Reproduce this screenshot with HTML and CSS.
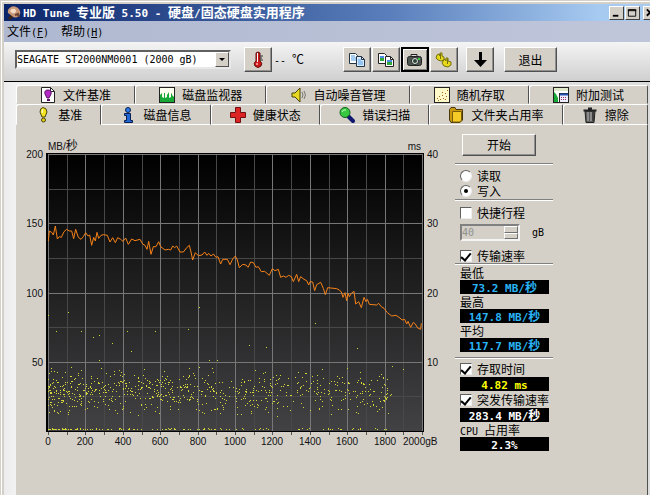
FILE: index.html
```html
<!DOCTYPE html>
<html lang="zh-CN">
<head>
    <meta charset="UTF-8">
    <meta name="viewport" content="width=device-width, initial-scale=1.0">
    <title>HD Tune 专业版 5.50</title>
    <link rel="stylesheet" href="styles.css">
</head>
<body>

    <header class="titlebar">
        <svg class="app-icon" width="16" height="16" viewBox="0 0 16 16">
            <path d="M8 9 L3 14" stroke="#3a2418" stroke-width="3"/>
            <path d="M2 8 Q1 4 5 2 Q8 0 12 3 Q16 7 13 11 Q9 14 6 11 Z" fill="#c89878"/>
            <path d="M4 6 Q5 3 9 4 Q11 6 9 8 Q6 9 4 6 Z" fill="#f2dcc4"/>
            <path d="M9 10 L12 9 L13 12" stroke="#6b4230" stroke-width="2" fill="none"/>
        </svg>
        <h1 class="title"><span class="latin">HD Tune </span>专业版<span class="latin"> 5.50 - </span>硬盘<span class="latin">/</span>固态硬盘实用程序</h1>
        <div class="window-buttons">
            <button class="win-btn" aria-label="最小化"><svg width="12" height="10" viewBox="0 0 12 10"><path d="M2 8h6" stroke="#000" stroke-width="2"/></svg></button>
            <button class="win-btn" aria-label="最大化"><svg width="12" height="10" viewBox="0 0 12 10"><path d="M1.500 1.500h8v7h-8zM1 1.500h9M1 2.500h9" stroke="#000" fill="none"/></svg></button>
            <button class="win-btn win-close" aria-label="关闭"><svg width="12" height="10" viewBox="0 0 12 10"><path d="M2 1l7 7M9 1l-7 7" stroke="#000" stroke-width="2"/></svg></button>
        </div>
    </header>

    <nav class="menubar">
        <a href="#file">文件<span class="latin">(<u>F</u>)</span></a>
        <a href="#help">帮助<span class="latin">(<u>H</u>)</span></a>
    </nav>

    <div class="toolbar">
        <div class="drive">
            <select class="drive-select" aria-label="硬盘">
                <option>SEAGATE ST2000NM0001 (2000 gB)</option>
            </select>
            <span class="drive-arrow"></span>
        </div>
        <button class="btn tool" aria-label="温度">
            <svg width="16" height="18" viewBox="0 0 16 18">
                <path d="M6 2q2-2 4 0v8q3 2 1 5q-3 3-6 0q-2-3 1-5z" fill="#d01818" stroke="#601010"/>
                <path d="M7.500 2v9" stroke="#fff"/>
                <path d="M10 5h3M10 7h2M10 9h3" stroke="#333"/>
                <circle cx="7" cy="13" r="1" fill="#ffb0b0"/>
            </svg>
        </button>
        <span class="temp"><span class="latin">--&nbsp;</span>℃</span>
        <div class="tool-group">
            <button class="btn tool" aria-label="复制文本">
                <svg width="18" height="16" viewBox="0 0 18 16">
                    <path d="M1.500 1.500h6l2 2v8h-8z" fill="#fff" stroke="#234"/>
                    <path d="M3 4h4M3 6h5M3 8h5" stroke="#4a9be8"/>
                    <path d="M8.500 4.500h5l3 3v7h-8z" fill="#d9ecff" stroke="#234"/>
                    <path d="M13.500 4.500v3h3" fill="none" stroke="#234"/>
                    <path d="M10 8h3M10 10h5M10 12h5" stroke="#4a9be8"/>
                </svg>
            </button>
            <button class="btn tool" aria-label="复制图像">
                <svg width="18" height="16" viewBox="0 0 18 16">
                    <path d="M1.500 1.500h6l2 2v8h-8z" fill="#fff" stroke="#222"/>
                    <path d="M3 4h4v5H3z" fill="#2ea836"/>
                    <path d="M3 4h4v2H3z" fill="#4a8be8"/>
                    <path d="M8.500 4.500h5l3 3v7h-8z" fill="#fff" stroke="#222"/>
                    <path d="M13.500 4.500v3h3" fill="none" stroke="#222"/>
                    <path d="M10 9h5v4h-5z" fill="#2ea836"/>
                    <path d="M10 8h5v2h-5z" fill="#4a8be8"/>
                </svg>
            </button>
            <button class="btn tool focused" aria-label="屏幕截图">
                <svg width="18" height="16" viewBox="0 0 18 16">
                    <path d="M5 5V2.500h6V5" fill="#ddd" stroke="#222"/>
                    <rect x="1.500" y="4.500" width="14" height="9" rx="2" fill="#4c5450" stroke="#222"/>
                    <circle cx="9" cy="9" r="3.500" fill="#e4ebe6" stroke="#222"/>
                    <circle cx="9" cy="9" r="2" fill="#2f4438"/>
                    <path d="M12 6h2v2h-2z" fill="#35d04c"/>
                </svg>
            </button>
            <button class="btn tool" aria-label="选项">
                <svg width="18" height="16" viewBox="0 0 18 16">
                    <g fill="#e6d91c" stroke="#77700a">
                        <path d="M2 3l2-1 1 2V1h2v3l2 1v3L6 9 3 8 1 6z"/>
                        <path d="M8 9l2-2 1 2V6h2v3l3 1v3l-3 2-4-1-2-3z"/>
                    </g>
                    <path d="M5.500 2v5M12.500 7v5" stroke="#77700a"/>
                </svg>
            </button>
        </div>
        <button class="btn tool" aria-label="保存">
            <svg width="16" height="18" viewBox="0 0 16 18"><path d="M7 1h3v8h5l-6.500 7L2 9h5z" fill="#000"/></svg>
        </button>
        <button class="btn exit">退出</button>
    </div>

    <main class="workspace">
        <nav class="tabs tabs-back">
            <a class="tab" href="#file-benchmark">
                <svg width="16" height="16" viewBox="0 0 16 16">
                    <path d="M1.500.500h9l4 4v11h-13z" fill="#fff" stroke="#222"/>
                    <path d="M10.500.500v4h4" fill="none" stroke="#222"/>
                    <path d="M5 7q-1-4 3-4t3 4l-2 4H7z" fill="#b428c4" stroke="#5a1064"/>
                    <path d="M7 12h3v2H7z" fill="#5a1064"/>
                </svg>文件基准</a>
            <a class="tab" href="#disk-monitor">
                <svg width="16" height="16" viewBox="0 0 16 16">
                    <rect x=".5" y=".5" width="15" height="15" fill="#fffff0" stroke="#222"/>
                    <path d="M1 15V8l2-2v4l2 1V6h1v5l2-1V8l2-3v6l2-1V7l1-1v2l2 2v5z" fill="#18a838"/>
                </svg>磁盘监视器</a>
            <a class="tab" href="#aam">
                <svg width="16" height="16" viewBox="0 0 16 16">
                    <path d="M1 6h3l5-5v14l-5-5H1z" fill="#e8d820" stroke="#4a4408"/>
                    <path d="M11 5q2 3 0 6M13 4q3 4 0 8" fill="none" stroke="#777"/>
                </svg>自动噪音管理</a>
            <a class="tab" href="#random-access">
                <svg width="16" height="16" viewBox="0 0 16 16">
                    <rect x=".5" y=".5" width="15" height="15" fill="#fff8c8" stroke="#222"/>
                    <path d="M3 11.500h1M5 9.500h1M6 12.500h1M8 8.500h1M9 11.500h1M11 6.500h1M12 9.500h1M4 13.500h1M11 12.500h1M8 5.500h1M13 3.500h1" stroke="#a86818"/>
                </svg>随机存取</a>
            <a class="tab" href="#extra-tests">
                <svg width="16" height="16" viewBox="0 0 16 16">
                    <rect x=".5" y=".5" width="15" height="15" fill="#fff" stroke="#222"/>
                    <path d="M1 1h14v3H1z" fill="#dfe8c8"/>
                    <path d="M1 15V5l2 2 2 4v4z" fill="#18a838"/>
                    <rect x="6.500" y="6.500" width="9" height="9" fill="#eef" stroke="#222"/>
                    <path d="M7 7.500h8" stroke="#2850b0" stroke-width="2"/>
                    <path d="M8 10.500h6M8 12.500h6" stroke="#a03060" stroke-dasharray="1 1"/>
                </svg>附加测试</a>
        </nav>
        <nav class="tabs tabs-front">
            <a class="tab active" href="#benchmark">
                <svg width="16" height="16" viewBox="0 0 16 16">
                    <path d="M5 5q0-4 3-4.500Q12 1 12 5l-2 5H7z" fill="#f4e420" stroke="#4a4408"/>
                    <path d="M7.500 2.500L7 6" stroke="#fff"/>
                    <circle cx="8.500" cy="13" r="2" fill="#e4d010" stroke="#4a4408"/>
                </svg>基准</a>
            <a class="tab" href="#info">
                <svg width="16" height="16" viewBox="0 0 16 16">
                    <circle cx="8" cy="3" r="2.500" fill="#2878e8" stroke="#0a2050"/>
                    <path d="M4.500 6.500h6v7h2v2h-8v-2h2v-5h-2z" fill="#2068d8" stroke="#0a2050"/>
                </svg>磁盘信息</a>
            <a class="tab" href="#health">
                <svg width="16" height="16" viewBox="0 0 16 16">
                    <path d="M5.500.500h5v5h5v5h-5v5h-5v-5h-5v-5h5z" fill="#dc2424" stroke="#701010"/>
                </svg>健康状态</a>
            <a class="tab" href="#error-scan">
                <svg width="16" height="16" viewBox="0 0 16 16">
                    <path d="M9 9l5 5" stroke="#101870" stroke-width="4" stroke-linecap="round"/>
                    <circle cx="6" cy="5.500" r="5" fill="#38c840" stroke="#156020"/>
                    <path d="M3 5q1-3 4-2" stroke="#c8ffc8" fill="none"/>
                </svg>错误扫描</a>
            <a class="tab" href="#folder-usage">
                <svg width="16" height="16" viewBox="0 0 16 16">
                    <path d="M1.500 13V2.500L3 .500h4l1 2h6.500V13L12 15.500H3z" fill="#c89a10" stroke="#4a3808"/>
                    <path d="M4.500 4.500h9v9l-2 1.500h-7z" fill="#f4cc28" stroke="#7a5c08"/>
                </svg>文件夹占用率</a>
            <a class="tab" href="#erase">
                <svg width="16" height="16" viewBox="0 0 16 16">
                    <path d="M3 4h10l-1 11.500H4z" fill="#5c5c5c" stroke="#222"/>
                    <path d="M1.500 3.500h13M6 1.500h4" stroke="#222" stroke-width="2"/>
                    <path d="M6 5v9M9 5v9" stroke="#bbb"/>
                    <path d="M11 5v9" stroke="#222"/>
                </svg>擦除</a>
        </nav>

        <section class="panel">
            <svg class="chart" id="chart" viewBox="0 0 439 330" role="img" aria-label="传输速率与存取时间">
                <defs>
                    <linearGradient id="plot" x1="0" y1="0" x2="0" y2="1">
                        <stop offset="0" stop-color="#000"/>
                        <stop offset="1" stop-color="#424244"/>
                    </linearGradient>
                </defs>
                <rect x="30" y="28" width="378" height="279" fill="#000"/>
                <rect x="32" y="29" width="375" height="277" fill="url(#plot)"/>
                <g id="grid"></g>
                <g id="labels"></g>
                <path id="access" class="access"/>
                <polyline id="transfer" class="transfer"/>
                <text x="32" y="25">MB/<tspan class="cjk">秒</tspan></text>
                <text x="405" y="25" text-anchor="end">ms</text>
            </svg>

            <form class="side">
                <button type="button" class="btn start">开始</button>
                <hr>
                <label class="row"><input type="radio" name="mode">读取</label>
                <label class="row"><input type="radio" name="mode" checked>写入</label>
                <hr>
                <label class="row short"><input type="checkbox">快捷行程</label>
                <div class="stroke">
                    <span class="spin">
                        <input type="text" value="40" aria-label="快捷行程容量" disabled>
                        <span class="spin-buttons">
                            <button type="button" aria-label="增加" disabled></button>
                            <button type="button" aria-label="减少" disabled></button>
                        </span>
                    </span>
                    <span class="latin">gB</span>
                </div>
                <label class="row"><input type="checkbox" checked>传输速率</label>
                <hr class="tight">
                <div class="name">最低</div>
                <output class="value rate"><span class="latin">73.2 MB/</span>秒</output>
                <div class="name">最高</div>
                <output class="value rate"><span class="latin">147.8 MB/</span>秒</output>
                <div class="name">平均</div>
                <output class="value rate"><span class="latin">117.7 MB/</span>秒</output>
                <hr class="last">
                <label class="row"><input type="checkbox" checked>存取时间</label>
                <output class="value time"><span class="latin">4.82 ms</span></output>
                <label class="row"><input type="checkbox" checked>突发传输速率</label>
                <output class="value"><span class="latin">283.4 MB/</span>秒</output>
                <div class="name"><span class="latin">CPU </span>占用率</div>
                <output class="value"><span class="latin">2.3%</span></output>
            </form>
        </section>
    </main>

    <script src="chart.js"></script>
</body>
</html>
```
FILE: styles.css
```css
* {
    box-sizing: border-box;
}

body {
    margin: 0;
    min-height: 100vh;
    padding: 4px 0 0 4px;
    display: flex;
    flex-direction: column;
    overflow: hidden;
    background: #d4d0c8;
    box-shadow: inset 1px 1px #d4d0c8, inset 2px 2px #fff;
    font-family: "Noto Sans CJK SC", sans-serif;
    font-size: 12px;
    line-height: 16px;
    color: #000;
}

a {
    color: inherit;
    text-decoration: none;
}

button,
input,
select {
    margin: 0;
    padding: 0;
    border-radius: 0;
    font: inherit;
    color: inherit;
}

.latin {
    font-family: "DejaVu Sans Mono", monospace;
    font-size: 10px;
    white-space: pre;
}

/* Title bar */
.titlebar {
    display: flex;
    align-items: center;
    height: 17px;
    background: linear-gradient(to right, #0a246a, #5a7fbc 60%, #a6caf0 92%);
    color: #fff;
}

.app-icon {
    margin-left: 2px;
}

.title {
    flex: 1;
    margin: 0 0 0 1px;
    font-size: 13px;
    line-height: 17px;
    white-space: nowrap;
}

.title .latin {
    font-size: 11px;
}

.window-buttons {
    display: flex;
    gap: 1px;
    margin-right: -8px;
}

.win-btn {
    display: flex;
    width: 15px;
    height: 14px;
    padding: 1px;
    background: #d4d0c8;
    border: 1px solid;
    border-color: #fff #404040 #404040 #fff;
}

.win-close {
    margin-left: 2px;
}

/* Menu */
.menubar {
    display: flex;
    gap: 12px;
    height: 21px;
    padding: 2px 3px;
    background: linear-gradient(to right, #aeb8d0, #c0c6da);
}

/* Toolbar */
.toolbar {
    display: flex;
    align-items: center;
    height: 40px;
    padding: 0 11px 4px;
    border-bottom: 1px solid #000;
    background: linear-gradient(#f4f4f4, #cfcfcf);
}

.drive {
    position: relative;
    flex: 0 1 216px;
}

.drive-select {
    display: block;
    width: 100%;
    height: 19px;
    appearance: none;
    border: 2px solid;
    border-color: #606060 #e8e8e8 #e8e8e8 #606060;
    background: #fff;
    font-family: "DejaVu Sans Mono", monospace;
    font-size: 10px;
    line-height: 14px;
}

.drive-arrow {
    position: absolute;
    top: 2px;
    right: 2px;
    bottom: 2px;
    width: 14px;
    display: grid;
    place-items: center;
    background: #d4d0c8;
    border: 1px solid;
    border-color: #fff #505050 #505050 #fff;
    pointer-events: none;
}

.drive-arrow::after {
    content: "";
    border: 3px solid transparent;
    border-top-color: #000;
    border-bottom: 0;
}

.btn {
    display: flex;
    align-items: center;
    justify-content: center;
    background: #d4d0c8;
    border: 1px solid;
    border-color: #fff #505050 #505050 #fff;
    box-shadow: inset -1px -1px #909090;
}

.tool {
    width: 28px;
    height: 25px;
}

.drive + .tool {
    margin-left: 13px;
}

.focused {
    border: 2px solid #000;
    box-shadow: inset 1px 1px #fff, inset -1px -1px #808080;
}

.temp {
    width: 71px;
    padding-left: 2px;
    white-space: nowrap;
}

.tool-group {
    display: flex;
    gap: 1px;
    margin-right: 8px;
}

.exit {
    width: 53px;
    height: 25px;
    margin-left: 10px;
}

/* Tabs */
.workspace {
    flex: 1;
    display: flex;
    flex-direction: column;
    padding: 3px 2px 0 12px;
    background: linear-gradient(to right, #ececee, #f2f2f2 12px, #dcdcdc);
}

.tabs {
    display: flex;
    height: 19px;
}

.tab {
    flex: 1 1 auto;
    display: flex;
    align-items: center;
    justify-content: center;
    gap: 7px;
    background: #d4d0c8;
    border: 1px solid;
    border-color: #fff #505050 transparent #fff;
    border-radius: 3px 2px 0 0;
    white-space: nowrap;
}

.tabs-front {
    height: 21px;
}

.tabs-front .tab {
    border-bottom-color: #fff;
}

.tabs-front .active {
    border-bottom-color: #d4d0c8;
}

/* Benchmark page */
.panel {
    flex: 1;
    display: grid;
    grid-template-columns: minmax(0, 439px) 98px 1fr;
    align-items: start;
    background: #d4d0c8;
    border-right: 1px solid #505050;
}

.chart {
    display: block;
    width: 100%;
}

.chart text {
    font-family: "Liberation Sans", Arial, sans-serif;
    font-size: 10px;
    fill: #111;
}

.chart .cjk {
    font-family: "Noto Sans CJK SC", sans-serif;
    font-size: 12px;
}

.grid-major {
    stroke: #777;
}

.grid-minor {
    stroke: #484848;
}

.tick {
    stroke: #555;
}

.transfer {
    fill: none;
    stroke: #f58218;
}

.access {
    fill: none;
    stroke: #d4d63a;
}

.side {
    padding-top: 9px;
}

.side hr {
    height: 2px;
    margin: 7px 0 3px;
    border: 0;
    border-top: 1px solid #808080;
    background: #fff;
}

.side .row + hr {
    margin-top: 1px;
}

.side .row + .tight {
    margin: 0;
}

.side .last {
    margin: 5px 0 2px;
}

.start {
    width: 74px;
    height: 22px;
    margin-left: 7px;
}

.row {
    display: flex;
    align-items: center;
    height: 15px;
    padding-left: 5px;
    gap: 5px;
    line-height: 15px;
    white-space: nowrap;
}

.row input {
    appearance: none;
    display: grid;
    place-items: center;
    flex: none;
    width: 12px;
    height: 12px;
    background: #fff;
    border: 1px solid;
    border-color: #606060 #eee #eee #606060;
}

.row input[type="radio"] {
    border-radius: 50%;
}

.row input[type="radio"]:checked::after {
    content: "";
    width: 4px;
    height: 4px;
    border-radius: 50%;
    background: #000;
}

.row input[type="checkbox"]:checked::after {
    content: "";
    width: 4px;
    height: 8px;
    border: solid #000;
    border-width: 0 2px 2px 0;
    transform: rotate(40deg);
}

.short {
    margin-top: 4px;
}

.stroke {
    display: flex;
    align-items: center;
    gap: 12px;
    margin: 4px 0 7px 5px;
}

.spin {
    display: flex;
    width: 60px;
    height: 17px;
    border: 2px solid;
    border-color: #808080 #f4f4f4 #f4f4f4 #808080;
}

.spin input {
    flex: 1;
    min-width: 0;
    border: 0;
    background: none;
    color: #909090;
    font-family: "DejaVu Sans Mono", monospace;
    font-size: 10px;
}

.spin-buttons {
    display: grid;
    width: 14px;
}

.spin-buttons button {
    background: #d4d0c8;
    border: 1px solid;
    border-color: #fff #707070 #707070 #fff;
}

.name {
    height: 15px;
    padding-left: 5px;
    line-height: 15px;
}

.value {
    display: block;
    height: 14px;
    margin: 0 4px 0 5px;
    background: #000;
    color: #fff;
    font-weight: bold;
    line-height: 14px;
    text-align: center;
}

.value .latin {
    font-size: 11px;
}

.value + .row,
.row + .value {
    margin-top: 1px;
}

.rate {
    color: #29b4f6;
}

.time {
    color: #ff0;
}
```
FILE: chart.js
```js
const NS = "http://www.w3.org/2000/svg";
const LEFT = 32, TOP = 29, WIDTH = 374, HEIGHT = 277;

// transfer curve, three units per chart unit
const curve = [
    145,333, 148,303, 155,307, 160,315, 166,288, 172,327, 178,320, 184,322, 192,305, 200,298,
    208,303, 215,303, 221,326, 227,298, 235,322, 243,328, 250,320, 257,308, 264,318, 269,315,
    275,346, 281,322, 286,333, 291,307, 296,325, 303,316, 310,314, 322,316, 330,336, 338,323,
    346,338, 353,323, 362,328, 369,334, 377,324, 385,343, 395,327, 405,332, 420,328, 428,342,
    435,346, 441,358, 446,334, 453,373, 460,350, 468,350, 476,335, 482,350, 495,360, 505,358,
    512,360, 518,348, 524,353, 530,348, 540,366, 550,366, 560,353, 568,346, 573,366, 578,390,
    586,368, 595,377, 606,375, 614,366, 621,376, 626,370, 633,378, 640,372, 648,382, 654,380,
    662,402, 668,388, 682,388, 690,404, 698,387, 706,378, 712,390, 718,413, 728,403, 738,405,
    744,412, 752,396, 760,398, 768,412, 775,410, 784,425, 794,424, 808,436, 817,416, 825,422,
    835,418, 842,442, 850,438, 858,442, 866,436, 874,440, 880,455, 890,433, 896,455, 902,440,
    912,448, 920,452, 926,465, 930,455, 938,456, 944,482, 950,464, 962,457, 970,475, 976,494,
    983,473, 1010,476, 1018,480, 1024,486, 1029,502, 1035,488, 1040,512, 1044,490, 1048,500,
    1054,490, 1062,484, 1067,522, 1076,515, 1084,533, 1092,502, 1098,515, 1102,508, 1108,523,
    1130,525, 1136,520, 1144,530, 1152,535, 1162,548, 1175,558, 1188,556, 1200,564, 1206,570,
    1214,568, 1220,582, 1224,574, 1232,592, 1240,577, 1246,582, 1253,594, 1262,598, 1264,580
];

// slow accesses above the main band
const slow = [
    32,190, 52,187, 40,206, 65,206, 77,212, 83,210, 96,218, 111,206, 115,226, 139,206, 172,204,
    183,182, 83,235, 193,235, 201,235, 233,220, 250,222, 299,198, 341,223, 387,244, 371,254
];

function add(parent, name, attrs) {
    const el = document.createElementNS(NS, name);
    for (const key in attrs) {
        el.setAttribute(key, attrs[key]);
    }
    document.getElementById(parent).appendChild(el);
    return el;
}

function line(x1, y1, x2, y2, cls) {
    add("grid", "line", { x1: x1, y1: y1, x2: x2, y2: y2, class: cls });
}

function label(x, y, anchor, text) {
    add("labels", "text", { x: x, y: y, "text-anchor": anchor }).textContent = text;
}

function drawGrid() {
    for (let pass = 1; pass >= 0; pass--) {
        const cls = pass ? "grid-minor" : "grid-major";
        for (let i = pass; i <= 20; i += 2) {
            const x = Math.round(LEFT + i * WIDTH / 20) + 0.5;
            line(x, TOP, x, TOP + HEIGHT, cls);
            line(x, TOP + HEIGHT + 1, x, TOP + HEIGHT + 4, "tick");
        }
        for (let i = pass; i < 8; i += 2) {
            const y = Math.round(TOP + i * HEIGHT / 8) + 0.5;
            line(LEFT, y, LEFT + WIDTH, y, cls);
        }
    }
}

function drawLabels() {
    for (let i = 0; i < 4; i++) {
        const y = Math.round(TOP + i * HEIGHT / 4) + 4;
        label(27, y, "end", 200 - i * 50);
        label(411, y, "start", 40 - i * 10);
    }
    for (let i = 0; i < 10; i++) {
        label(Math.round(LEFT + i * WIDTH / 10), 320, "middle", i * 200);
    }
    label(387, 320, "start", "2000gB");
}

// fixed seed, so the scatter is the same on every load
let seed = 2000;
function random() {
    seed = (seed * 16807) % 2147483647;
    return seed / 2147483647;
}

function drawAccess() {
    let d = "";
    function dot(x, y) {
        d += "M" + Math.floor(x) + " " + (Math.floor(y) + 0.5) + "h1";
    }
    for (let i = 0; i < 760; i++) {
        const x = Math.pow(random(), 1.3) * 345;
        const spread = random() + random() - 1;
        dot(LEFT + x, 267 + spread * 26);
    }
    for (let i = 0; i < 130; i++) {
        dot(LEFT + Math.pow(random(), 1.5) * 345, 304 - Math.floor(random() * 1.3));
    }
    for (let i = 0; i < slow.length; i += 2) {
        dot(slow[i], slow[i + 1]);
    }
    document.getElementById("access").setAttribute("d", d);
}

function drawTransfer() {
    const points = [];
    for (let i = 0; i < curve.length; i += 2) {
        points.push((curve[i] / 3 - 16) + "," + (curve[i + 1] / 3 + 5));
    }
    document.getElementById("transfer").setAttribute("points", points.join(" "));
}

drawGrid();
drawLabels();
drawAccess();
drawTransfer();
```
